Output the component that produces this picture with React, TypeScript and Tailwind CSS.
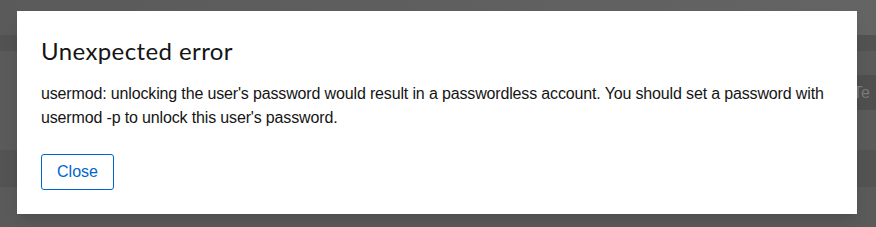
export default function App() {
  return (
    <div className="relative w-[876px] h-[227px] overflow-hidden bg-[#585858] font-['Liberation_Sans',Arial,sans-serif]">
      {/* dimmed page underneath */}
      <div className="flex flex-col">
        <div className="h-[35px] bg-gradient-to-r from-[#5a5a5a] to-[#646464]" />
        <div className="h-[16px] bg-[#525252]" />
        <div className="h-[24px] bg-[#5a5a5a]" />
        <div className="h-[35px] bg-[#5a5a5a] flex justify-end">
          <div className="w-[28px] bg-[#4f4f4f] flex items-center pl-[5px] text-[16px] text-[#7a7a7a] overflow-hidden whitespace-nowrap">
            Te
          </div>
        </div>
        <div className="h-[40px] bg-[#5a5a5a]" />
        <div className="h-[37px] bg-[#535353]" />
        <div className="h-[40px] bg-[#5a5a5a]" />
      </div>

      {/* modal */}
      <div className="absolute left-[17px] top-[11px] w-[840px] h-[203px] bg-white p-6 shadow-lg">
        <h1 className="text-[24px] leading-[31px] tracking-[0.4px] text-[#151515] font-['Lato',sans-serif]">
          Unexpected error
        </h1>
        <p className="mt-4 text-[16px] leading-6 tracking-[-0.15px] text-[#151515]">
          usermod: unlocking the user's password would result in a passwordless account. You should set a password with usermod -p to unlock this user's password.
        </p>
        <button className="mt-[24px] h-9 w-[73px] rounded-[3px] border border-[#0066cc] text-[16px] text-[#0066cc] bg-white">
          Close
        </button>
      </div>
    </div>
  )
}
